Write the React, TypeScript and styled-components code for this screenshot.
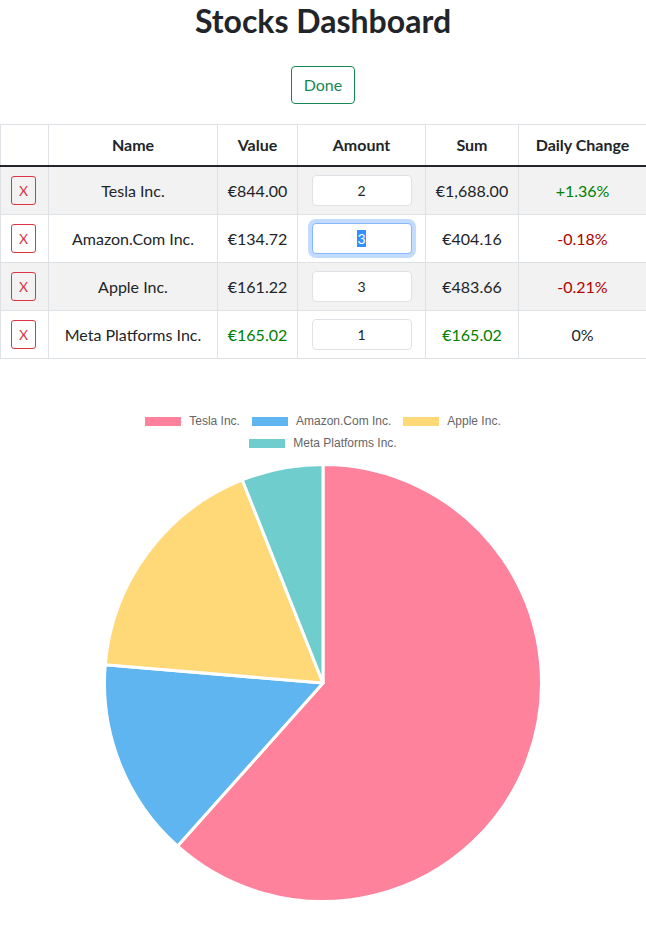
import styled, { createGlobalStyle, css } from "styled-components";

type Tone = "up" | "down" | "none";

interface Stock {
  name: string;
  value: string;
  amount: number;
  sum: number;
  sumLabel: string;
  change: string;
  changeTone: Tone;
  priceTone: Tone;
  color: string;
  focused?: boolean;
}

const stocks: Stock[] = [
  {
    name: "Tesla Inc.",
    value: "€844.00",
    amount: 2,
    sum: 1688,
    sumLabel: "€1,688.00",
    change: "+1.36%",
    changeTone: "up",
    priceTone: "none",
    color: "rgb(255, 130, 157)",
  },
  {
    name: "Amazon.Com Inc.",
    value: "€134.72",
    amount: 3,
    sum: 404.16,
    sumLabel: "€404.16",
    change: "-0.18%",
    changeTone: "down",
    priceTone: "none",
    color: "rgb(94, 181, 239)",
    focused: true,
  },
  {
    name: "Apple Inc.",
    value: "€161.22",
    amount: 3,
    sum: 483.66,
    sumLabel: "€483.66",
    change: "-0.21%",
    changeTone: "down",
    priceTone: "none",
    color: "rgb(255, 216, 120)",
  },
  {
    name: "Meta Platforms Inc.",
    value: "€165.02",
    amount: 1,
    sum: 165.02,
    sumLabel: "€165.02",
    change: "0%",
    changeTone: "none",
    priceTone: "up",
    color: "rgb(111, 205, 205)",
  },
];

const GlobalStyle = createGlobalStyle`
  body {
    margin: 0;
    font-family: Lato, "Noto Sans", sans-serif;
    font-size: 16px;
    line-height: 1.5;
    color: #212529;
    background: #fff;
  }
`;

const toneColor = (tone: Tone) =>
  tone === "up" ? "green" : tone === "down" ? "#b00000" : "#212529";

export default function App() {
  return (
    <>
      <GlobalStyle />
      <Page>
        <Title>Stocks Dashboard</Title>
        <Toolbar>
          <DoneButton type="button">Done</DoneButton>
        </Toolbar>
        <StockTable />
        <PieChart />
      </Page>
    </>
  );
}

const StockTable = () => (
  <Table>
    <colgroup>
      <col style={{ width: 48 }} />
      <col style={{ width: 169 }} />
      <col style={{ width: 80 }} />
      <col style={{ width: 128 }} />
      <col style={{ width: 93 }} />
      <col style={{ width: 128 }} />
    </colgroup>
    <thead>
      <tr>
        <Th></Th>
        <Th>Name</Th>
        <Th>Value</Th>
        <Th>Amount</Th>
        <Th>Sum</Th>
        <Th>Daily Change</Th>
      </tr>
    </thead>
    <tbody>
      {stocks.map((s) => (
        <tr key={s.name}>
          <Td>
            <RemoveButton type="button">X</RemoveButton>
          </Td>
          <Td>{s.name}</Td>
          <Td tone={s.priceTone}>{s.value}</Td>
          <Td>
            {s.focused ? (
              <AmountBox focused>
                <Selected>{s.amount}</Selected>
              </AmountBox>
            ) : (
              <AmountInput type="number" defaultValue={s.amount} />
            )}
          </Td>
          <Td tone={s.priceTone}>{s.sumLabel}</Td>
          <Td tone={s.changeTone}>{s.change}</Td>
        </tr>
      ))}
    </tbody>
  </Table>
);

const PieChart = () => {
  const total = stocks.reduce((acc, s) => acc + s.sum, 0);
  const cx = 220;
  const cy = 220;
  const r = 218.5;
  let start = 0;
  const slices = stocks.map((s) => {
    const sweep = (s.sum / total) * Math.PI * 2;
    const end = start + sweep;
    const x1 = cx + r * Math.sin(start);
    const y1 = cy - r * Math.cos(start);
    const x2 = cx + r * Math.sin(end);
    const y2 = cy - r * Math.cos(end);
    const large = sweep > Math.PI ? 1 : 0;
    const d = `M ${cx} ${cy} L ${x1} ${y1} A ${r} ${r} 0 ${large} 1 ${x2} ${y2} Z`;
    start = end;
    return { d, color: s.color, name: s.name };
  });

  return (
    <ChartWrap>
      <Legend>
        {stocks.map((s) => (
          <LegendItem key={s.name}>
            <LegendBox color={s.color} />
            {s.name}
          </LegendItem>
        ))}
      </Legend>
      <svg width="440" height="440" viewBox="0 0 440 440">
        {slices.map((sl) => (
          <path
            key={sl.name}
            d={sl.d}
            fill={sl.color}
            stroke="#fff"
            strokeWidth="3"
            strokeLinejoin="round"
          />
        ))}
      </svg>
    </ChartWrap>
  );
};

const Page = styled.div`
  width: 646px;
  padding-bottom: 40px;
`;

const Title = styled.h1`
  margin: 0;
  padding-top: 2px;
  text-align: center;
  font-family: Lato, "Noto Sans", sans-serif;
  font-size: 32px;
  font-weight: 700;
  line-height: 1.2;
  color: #212529;
`;

const Toolbar = styled.div`
  display: flex;
  justify-content: center;
  margin: 26px 0 20px;
`;

const DoneButton = styled.button`
  font-family: inherit;
  font-size: 16px;
  line-height: 1.5;
  padding: 6px 12px;
  color: #198754;
  background: transparent;
  border: 1px solid #198754;
  border-radius: 4px;
  cursor: pointer;
`;

const Table = styled.table`
  width: 100%;
  table-layout: fixed;
  border-collapse: collapse;
  text-align: center;

  tbody tr:nth-child(odd) td {
    background: #f2f2f2;
  }
  thead th {
    border-bottom: 2px solid #212529;
  }
`;

const Th = styled.th`
  padding: 8px;
  border: 1px solid #dee2e6;
  font-weight: 700;
  vertical-align: middle;
`;

const Td = styled.td<{ tone?: Tone }>`
  padding: 8px;
  height: 31px;
  border: 1px solid #dee2e6;
  vertical-align: middle;
  color: ${(p) => toneColor(p.tone ?? "none")};
`;

const RemoveButton = styled.button`
  display: block;
  font-family: inherit;
  font-size: 14px;
  line-height: 1.5;
  padding: 3px 7px;
  color: #dc3545;
  background: transparent;
  border: 1px solid #dc3545;
  border-radius: 3px;
  margin-left: 2px;
  cursor: pointer;
`;

const inputLook = css`
  box-sizing: border-box;
  width: 100px;
  height: 31px;
  margin: 0 auto;
  padding: 4px 8px;
  font-family: inherit;
  font-size: 14px;
  line-height: 1.5;
  text-align: center;
  color: #212529;
  background: #fff;
  border: 1px solid #dee2e6;
  border-radius: 4px;
`;

const AmountInput = styled.input`
  ${inputLook}
  display: block;
  -moz-appearance: textfield;
  &::-webkit-outer-spin-button,
  &::-webkit-inner-spin-button {
    -webkit-appearance: none;
    margin: 0;
  }
`;

const AmountBox = styled.div<{ focused?: boolean }>`
  ${inputLook}
  ${(p) =>
    p.focused &&
    css`
      border-color: #86b7fe;
      box-shadow: 0 0 0 4px rgba(13, 110, 253, 0.25);
    `}
`;

const Selected = styled.span`
  background: #3390ff;
  color: #fff;
`;

const ChartWrap = styled.div`
  display: flex;
  flex-direction: column;
  align-items: center;
  margin-top: 56px;
  gap: 14px;
`;

const Legend = styled.div`
  display: flex;
  flex-wrap: wrap;
  justify-content: center;
  column-gap: 12px;
  row-gap: 10px;
  max-width: 370px;
  font-family: "Liberation Sans", Arial, sans-serif;
  font-size: 12px;
  line-height: 12px;
  color: #666;
`;

const LegendItem = styled.div`
  display: flex;
  align-items: center;
  gap: 8px;
`;

const LegendBox = styled.span<{ color: string }>`
  width: 36px;
  height: 9px;
  background: ${(p) => p.color};
`;
